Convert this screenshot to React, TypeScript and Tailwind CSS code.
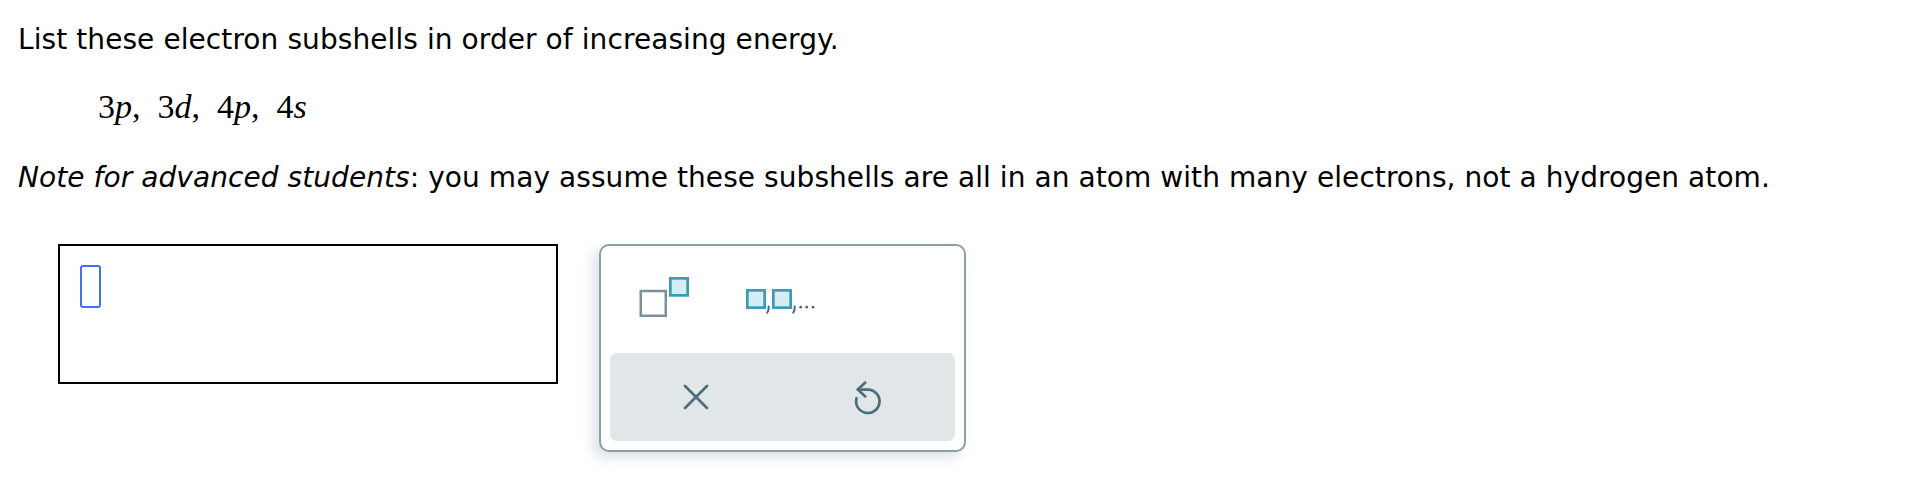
import React from 'react';

const SuperscriptIcon = () => (
  <svg width="52" height="43" viewBox="0 0 52 43">
    <rect x="1.75" y="15" width="25" height="24.8" fill="#ffffff" stroke="#7b929b" strokeWidth="2.5" />
    <rect x="31.35" y="2.35" width="17.3" height="17" fill="#d4eef4" stroke="#3d9bb5" strokeWidth="2.7" />
  </svg>
);

const ListIcon = () => (
  <svg width="72" height="30" viewBox="0 0 72 30">
    <rect x="2.35" y="4.35" width="17.3" height="17.3" fill="#d4eef4" stroke="#3d9bb5" strokeWidth="2.7" />
    <rect x="28.35" y="4.35" width="17.3" height="17.3" fill="#d4eef4" stroke="#3d9bb5" strokeWidth="2.7" />
    <path d="M23.6 20.5 v2.6 q0 2 -1.4 3.6" fill="none" stroke="#4a6470" strokeWidth="2" strokeLinecap="round" />
    <path d="M49.6 20.5 v2.6 q0 2 -1.4 3.6" fill="none" stroke="#4a6470" strokeWidth="2" strokeLinecap="round" />
    <circle cx="55.7" cy="21.2" r="1.35" fill="#4d6772" />
    <circle cx="61.7" cy="21.2" r="1.35" fill="#4d6772" />
    <circle cx="68" cy="21.2" r="1.35" fill="#4d6772" />
  </svg>
);

const ClearIcon = () => (
  <svg width="26" height="26" viewBox="0 0 26 26">
    <path d="M2 2 L24 24 M24 2 L2 24" stroke="#4c6e7b" strokeWidth="2.7" strokeLinecap="round" />
  </svg>
);

const UndoIcon = () => (
  <svg width="36" height="36" viewBox="0 0 36 36">
    <path
      d="M6.8 9.6 L16.8 9.6 A11.7 11.7 0 1 1 5.5 18.3"
      fill="none"
      stroke="#4c6e7b"
      strokeWidth="2.7"
      strokeLinecap="round"
      strokeLinejoin="round"
    />
    <path d="M14.3 2.6 L6.8 9.6 L14.3 16.4" fill="none" stroke="#4c6e7b" strokeWidth="2.7" strokeLinecap="round" strokeLinejoin="round" />
  </svg>
);

const mathItems = [
  { n: '3', l: 'p' },
  { n: '3', l: 'd' },
  { n: '4', l: 'p' },
  { n: '4', l: 's' },
];

export default function App() {
  return (
    <div className="min-h-[494px] bg-white text-black" style={{ fontFamily: '"DejaVu Sans", Verdana, sans-serif' }}>
      <div className="pt-[24px] pl-[18px]">
        <p className="text-[28px] leading-[32px] tracking-[0.08px]">List these electron subshells in order of increasing energy.</p>

        <div
          className="mt-[31px] ml-[80px] text-[34px] leading-[40px] whitespace-nowrap"
          style={{ fontFamily: '"Liberation Serif", "Times New Roman", serif' }}
        >
          {mathItems.map((m, i) => (
            <span key={i}>
              <span>{m.n}</span>
              <span className="italic">{m.l}</span>
              {i < mathItems.length - 1 && <span className="mr-[17px]">,</span>}
            </span>
          ))}
        </div>

        <p className="mt-[35px] text-[28px] leading-[32px] tracking-[0.07px] whitespace-nowrap">
          <span className="italic">Note for advanced students</span>: you may assume these subshells are all in an atom with many electrons, not a hydrogen atom.
        </p>
      </div>

      <div className="mt-[50px] pl-[58px] flex items-start">
        <div className="w-[500px] h-[140px] border-2 border-black pt-[19px] pl-[20px]">
          <div className="w-[21px] h-[43px] border-2 border-[#4a6cf7] rounded-[3px]" />
        </div>

        <div className="ml-[41px] w-[367px] h-[208px] border-2 border-[#8c9ea7] rounded-[10px] bg-white px-[9px] pb-[9px] flex flex-col shadow-[-6px_6px_12px_rgba(120,144,156,0.25)]">
          <div className="h-[107px] flex items-start">
            <button className="ml-[29px] mt-[30px]">
              <SuperscriptIcon />
            </button>
            <button className="ml-[54px] mt-[40px]">
              <ListIcon />
            </button>
          </div>
          <div className="flex-1 bg-[#e1e6e9] rounded-[7px] flex">
            <button className="flex-1 flex items-center justify-center">
              <ClearIcon />
            </button>
            <button className="flex-1 flex items-center justify-center">
              <span className="mt-[2px]">
                <UndoIcon />
              </span>
            </button>
          </div>
        </div>
      </div>
    </div>
  );
}
